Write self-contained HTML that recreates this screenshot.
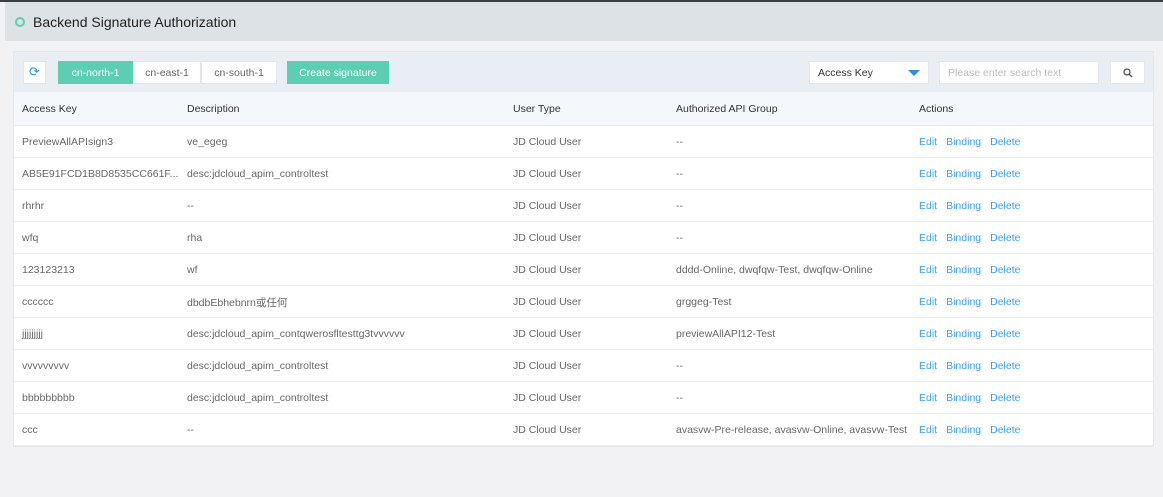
<!DOCTYPE html>
<html><head><meta charset="utf-8"><style>
*{box-sizing:border-box;margin:0;padding:0}
body{width:1163px;height:497px;overflow:hidden;background:#f2f2f4;font-family:"Liberation Sans","Noto Sans CJK SC",sans-serif;font-size:10.5px;color:#555;position:relative}
.top{position:absolute;left:0;top:0;width:1163px;height:2px;background:#3a3d44}
.hdr{position:absolute;left:5px;top:2px;width:1158px;height:39px;background:#dce2e5}
.hdr .dot{position:absolute;left:10px;top:15px;width:10px;height:10px;border:2px solid #5dd0b0;border-radius:50%}
.hdr .t{position:absolute;left:28px;top:12px;font-size:14px;color:#222}
.panel{position:absolute;left:13px;top:51px;width:1141px;height:396px;border:1px solid #e3e8ee;background:#fff}
.bar{height:40px;background:#e9eef4;position:relative}
.btn{position:absolute;top:9px;height:23px;background:#fff;border:1px solid #e3e6ea;line-height:22px;text-align:center;color:#666}
table{border-collapse:collapse;width:100%;table-layout:fixed}
td{height:32px;border-bottom:1px solid #e8edf2;padding-left:8px;padding-top:2px;color:#666;white-space:nowrap;overflow:hidden}
tr.h td{background:#f4f7fb;height:33px;color:#333}
.a{color:#3ba0ea;margin-right:9px}
</style></head><body>
<div class="top"></div>
<div class="hdr"><div class="dot"></div><div class="t">Backend Signature Authorization</div></div>
<div class="panel">
<div class="bar">
<div class="btn" style="left:9px;width:23px;color:#2a8fe6;font-size:13px;line-height:20px">⟳</div>
<div class="btn" style="left:44px;width:75px;background:#5ccfb1;border-color:#5ccfb1;color:#fff">cn-north-1</div>
<div class="btn" style="left:119px;width:68px">cn-east-1</div>
<div class="btn" style="left:187px;width:76px">cn-south-1</div>
<div class="btn" style="left:273px;width:102px;background:#5ccfb1;border-color:#5ccfb1;color:#fff">Create signature</div>
<div class="btn" style="left:795px;width:120px;text-align:left;padding-left:8px;color:#333">Access Key<span style="position:absolute;right:8px;top:8px;border-left:6px solid transparent;border-right:6px solid transparent;border-top:6px solid #2a8fe6"></span></div>
<div class="btn" style="left:925px;width:160px;text-align:left;padding-left:8px;color:#bbb">Please enter search text</div>
<div class="btn" style="left:1096px;width:35px;color:#555"><svg width="10" height="10" viewBox="0 0 10 10" style="margin-top:6px"><circle cx="4" cy="4" r="3" fill="none" stroke="#555" stroke-width="1.3"/><path d="M6.2 6.2L9 9" stroke="#555" stroke-width="1.4"/></svg></div>
</div>
<table>
<colgroup><col style="width:165px"><col style="width:326px"><col style="width:163px"><col style="width:243px"><col></colgroup>
<tr class="h"><td>Access Key</td><td>Description</td><td>User Type</td><td>Authorized API Group</td><td>Actions</td></tr>
<tr><td>PreviewAllAPIsign3</td><td>ve_egeg</td><td>JD Cloud User</td><td>--</td><td><span class="a">Edit</span><span class="a">Binding</span><span class="a">Delete</span></td></tr>
<tr><td>AB5E91FCD1B8D8535CC661F...</td><td>desc:jdcloud_apim_controltest</td><td>JD Cloud User</td><td>--</td><td><span class="a">Edit</span><span class="a">Binding</span><span class="a">Delete</span></td></tr>
<tr><td>rhrhr</td><td>--</td><td>JD Cloud User</td><td>--</td><td><span class="a">Edit</span><span class="a">Binding</span><span class="a">Delete</span></td></tr>
<tr><td>wfq</td><td>rha</td><td>JD Cloud User</td><td>--</td><td><span class="a">Edit</span><span class="a">Binding</span><span class="a">Delete</span></td></tr>
<tr><td>123123213</td><td>wf</td><td>JD Cloud User</td><td>dddd-Online, dwqfqw-Test, dwqfqw-Online</td><td><span class="a">Edit</span><span class="a">Binding</span><span class="a">Delete</span></td></tr>
<tr><td>cccccc</td><td>dbdbEbhebnrn或任何</td><td>JD Cloud User</td><td>grggeg-Test</td><td><span class="a">Edit</span><span class="a">Binding</span><span class="a">Delete</span></td></tr>
<tr><td>jjjjjjjjj</td><td>desc:jdcloud_apim_contqwerosfltesttg3tvvvvvv</td><td>JD Cloud User</td><td>previewAllAPI12-Test</td><td><span class="a">Edit</span><span class="a">Binding</span><span class="a">Delete</span></td></tr>
<tr><td>vvvvvvvvv</td><td>desc:jdcloud_apim_controltest</td><td>JD Cloud User</td><td>--</td><td><span class="a">Edit</span><span class="a">Binding</span><span class="a">Delete</span></td></tr>
<tr><td>bbbbbbbbb</td><td>desc:jdcloud_apim_controltest</td><td>JD Cloud User</td><td>--</td><td><span class="a">Edit</span><span class="a">Binding</span><span class="a">Delete</span></td></tr>
<tr><td>ccc</td><td>--</td><td>JD Cloud User</td><td>avasvw-Pre-release, avasvw-Online, avasvw-Test</td><td><span class="a">Edit</span><span class="a">Binding</span><span class="a">Delete</span></td></tr>
</table>
</div>
</body></html>
